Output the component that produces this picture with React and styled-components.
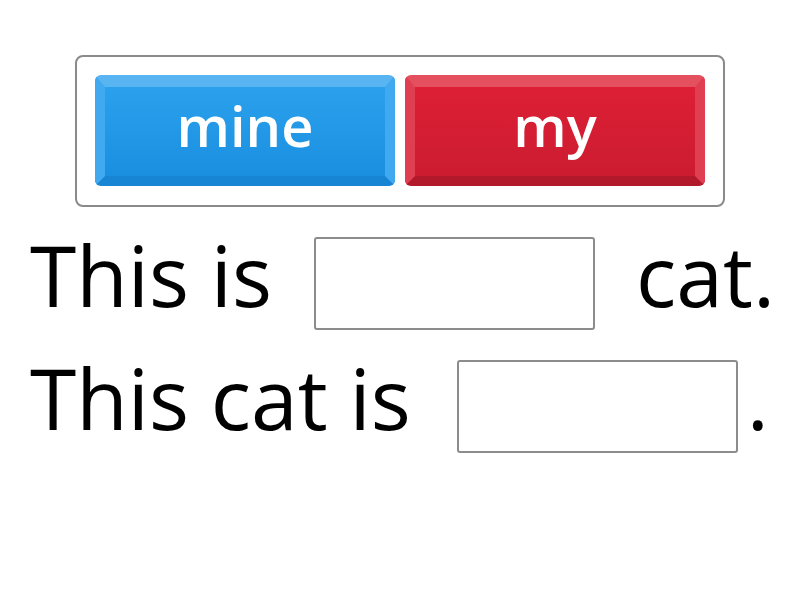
import React from "react";
import styled, { createGlobalStyle } from "styled-components";

const Global = createGlobalStyle`
  html, body { margin: 0; padding: 0; background: #fff; }
  body { font-family: "Open Sans", "Noto Sans", sans-serif; }
`;

const Page = styled.div`
  width: 800px;
  height: 600px;
  padding-top: 55px;
  box-sizing: border-box;
`;

const Bank = styled.div`
  width: 650px;
  height: 152px;
  margin: 0 auto;
  box-sizing: border-box;
  border: 2px solid #8a8a8a;
  border-radius: 8px;
  padding: 18px;
  display: flex;
  gap: 10px;
`;

const themes = {
  blue: {
    top: "#58b5f2",
    side: "#40a9ef",
    bottom: "#1884d4",
    face: "linear-gradient(#2ba1ed, #1a8fe0)",
  },
  red: {
    top: "#e5505f",
    side: "#e03f52",
    bottom: "#b21a2b",
    face: "linear-gradient(#dd1f35, #cc1c30)",
  },
};

const Tile = styled.div`
  flex: 0 0 300px;
  height: 111px;
  box-sizing: border-box;
  border-radius: 6px;
  border-style: solid;
  border-width: 12px 10px 10px 10px;
  border-color: ${(p) => themes[p.$c].top} ${(p) => themes[p.$c].side}
    ${(p) => themes[p.$c].bottom} ${(p) => themes[p.$c].side};
  background: ${(p) => themes[p.$c].face};
  display: flex;
  align-items: center;
  justify-content: center;
  color: #fff;
  font-family: "Open Sans", sans-serif;
  font-weight: 600;
  font-size: 56px;
  line-height: 1;
  padding-bottom: 14px;
`;

const Sentences = styled.div`
  padding: 12px 0 0 30px;
  display: flex;
  flex-direction: column;
  gap: 12px;
`;

const Line = styled.div`
  display: flex;
  align-items: center;
  font-family: "Open Sans", sans-serif;
  font-size: 84px;
  line-height: 93px;
  color: #000;
  white-space: pre;
`;

const Blank = styled.div`
  width: 281px;
  height: 93px;
  box-sizing: border-box;
  border: 2px solid #8c8c8c;
  border-radius: 3px;
  background: #fff;
  margin: 18px ${(p) => p.$right}px 0 ${(p) => p.$left}px;
`;

export default function App() {
  return (
    <>
      <Global />
      <Page>
        <Bank>
          <Tile $c="blue">mine</Tile>
          <Tile $c="red">my</Tile>
        </Bank>
        <Sentences>
          <Line>
            This is
            <Blank $left={42} $right={41} />
            cat.
          </Line>
          <Line>
            This cat is
            <Blank $left={46} $right={9} />
            .
          </Line>
        </Sentences>
      </Page>
    </>
  );
}
